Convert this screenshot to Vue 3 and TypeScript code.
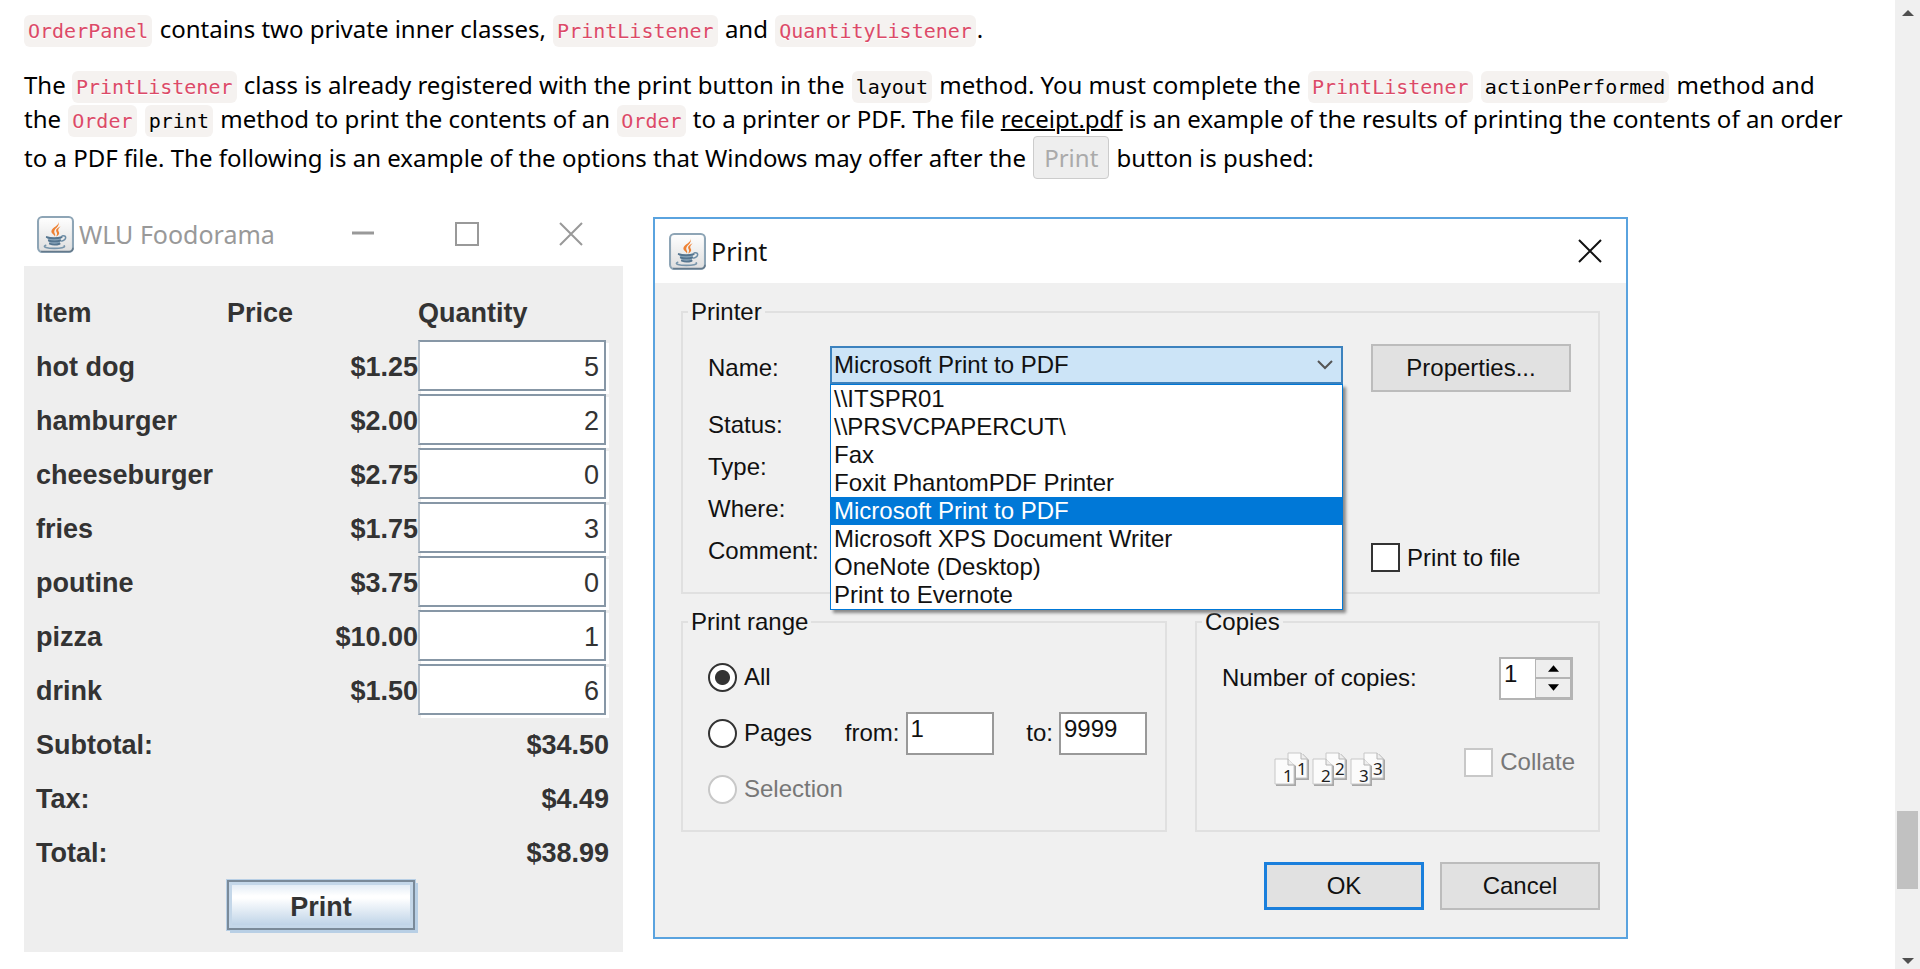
<script setup lang="ts">
import { ref } from 'vue'

interface MenuItem {
  name: string
  price: string
  quantity: string
}

const items = ref<MenuItem[]>([
  { name: 'hot dog', price: '$1.25', quantity: '5' },
  { name: 'hamburger', price: '$2.00', quantity: '2' },
  { name: 'cheeseburger', price: '$2.75', quantity: '0' },
  { name: 'fries', price: '$1.75', quantity: '3' },
  { name: 'poutine', price: '$3.75', quantity: '0' },
  { name: 'pizza', price: '$10.00', quantity: '1' },
  { name: 'drink', price: '$1.50', quantity: '6' },
])

const totals = [
  { label: 'Subtotal:', value: '$34.50' },
  { label: 'Tax:', value: '$4.49' },
  { label: 'Total:', value: '$38.99' },
]

const printers = [
  '\\\\ITSPR01',
  '\\\\PRSVCPAPERCUT\\',
  'Fax',
  'Foxit PhantomPDF Printer',
  'Microsoft Print to PDF',
  'Microsoft XPS Document Writer',
  'OneNote (Desktop)',
  'Print to Evernote',
]

const printer = ref('Microsoft Print to PDF')
const range = ref('all')
const fromPage = ref('1')
const toPage = ref('9999')
const copies = ref('1')
const toFile = ref(false)
const sheets = [1, 2, 3]
</script>

<template>
  <div class="page">
    <main class="content">
      <p>
        <code>OrderPanel</code> contains two private inner classes, <code>PrintListener</code> and
        <code>QuantityListener</code>.
      </p>
      <p>
        The <code>PrintListener</code> class is already registered with the print button in the
        <code class="method">layout</code> method. You must complete the <code>PrintListener</code>
        {{ ' ' }}<code class="method">actionPerformed</code> method and<br />
        the <code>Order</code>
        {{ ' ' }}<code class="method">print</code> method to print the contents of an
        <code>Order</code> to a printer or PDF. The file <a href="#receipt">receipt.pdf</a> is an
        example of the results of printing the contents of an order<br />
        to a PDF file. The following is an example of the options that Windows may offer after the
        <button class="key" type="button" disabled>Print</button> button is pushed:
      </p>

      <div class="screens">
        <section class="order">
          <header class="order-title">
            <svg class="java" viewBox="0 0 36 36" aria-hidden="true">
              <defs>
                <linearGradient id="tile" x1="0" y1="0" x2="0" y2="1">
                  <stop offset="0" stop-color="#ffffff" />
                  <stop offset="1" stop-color="#dedede" />
                </linearGradient>
                <symbol id="java-cup" viewBox="0 0 36 36">
                  <rect x="1" y="1" width="34" height="34" rx="4" fill="url(#tile)" stroke="#8ea5b6" stroke-width="2" />
                  <path d="M4 34.500H32Q35 34.500 35 31" fill="none" stroke="#64798a" stroke-width="1.500" />
                  <path d="M21 5C22.500 9 14 11 14 15C14 17 17 18 17.500 20C18.500 17 16 16.500 17 14C18 11.500 22.500 9.500 21 5Z" fill="#ee8133" />
                  <path d="M23 10C19 12 18 13.500 19 15.500C19.800 17 19.800 18 18.500 20C22 18 22 16.500 21 15C20 13.500 21 12 23 10Z" fill="#ee8133" />
                  <path d="M9.500 20.500C13 21.800 20 21.800 24 20.500L22 27C20 28.500 14.500 28.500 12.500 27Z" fill="#8aa5ba" />
                  <path d="M9.500 20.500C13 22 20 22 24 20.500M11.500 24C14 25 20 25 22.500 24M12.500 27C15 28 19 28 22 27" fill="none" stroke="#55758f" stroke-width="1.800" stroke-linecap="round" />
                  <path d="M24 19.500C29 18 29.500 23 23.500 24.500" fill="none" stroke="#6d8da6" stroke-width="1.500" />
                  <path d="M8.500 28.500C4.500 30 10 31.500 17 31.500C23 31.500 28 30.500 26.500 29" fill="none" stroke="#7895ab" stroke-width="1.500" stroke-linecap="round" />
                </symbol>
              </defs>
              <use href="#java-cup" />
            </svg>
            <h2>WLU Foodorama</h2>
            <div class="order-controls">
              <button type="button" aria-label="Minimize">
                <svg viewBox="0 0 24 24"><path d="M1 11H23" stroke-width="3" /></svg>
              </button>
              <button type="button" aria-label="Maximize">
                <svg viewBox="0 0 24 24"><rect x="1" y="1" width="22" height="22" stroke-width="2" /></svg>
              </button>
              <button type="button" aria-label="Close">
                <svg viewBox="0 0 24 24"><path d="M1 1L23 23M23 1L1 23" stroke-width="2" /></svg>
              </button>
            </div>
          </header>
          <div class="order-body">
            <table>
              <thead>
                <tr>
                  <th scope="col">Item</th>
                  <th scope="col">Price</th>
                  <th scope="col">Quantity</th>
                </tr>
              </thead>
              <tbody>
                <tr v-for="item in items" :key="item.name">
                  <th scope="row">{{ item.name }}</th>
                  <td>{{ item.price }}</td>
                  <td class="control">
                    <input v-model="item.quantity" class="quantity" type="text" :aria-label="item.name + ' quantity'" />
                  </td>
                </tr>
              </tbody>
              <tfoot>
                <tr v-for="total in totals" :key="total.label">
                  <th scope="row">{{ total.label }}</th>
                  <td></td>
                  <td>{{ total.value }}</td>
                </tr>
                <tr>
                  <td></td>
                  <td class="control"><button class="metal" type="button">Print</button></td>
                  <td></td>
                </tr>
              </tfoot>
            </table>
          </div>
        </section>

        <section class="dialog" role="dialog" aria-labelledby="dialog-title">
          <header class="dialog-title">
            <svg class="java" viewBox="0 0 36 36" aria-hidden="true"><use href="#java-cup" /></svg>
            <h2 id="dialog-title">Print</h2>
            <button class="dialog-close" type="button" aria-label="Close">
              <svg viewBox="0 0 24 24"><path d="M1 1L23 23M23 1L1 23" stroke-width="2" /></svg>
            </button>
          </header>
          <form class="dialog-body" @submit.prevent>
            <fieldset class="printer">
              <legend>Printer</legend>
              <div class="printer-grid">
                <label for="printer-name">Name:</label>
                <div class="combo">
                  <select id="printer-name" v-model="printer">
                    <option v-for="name in printers" :key="name">{{ name }}</option>
                  </select>
                  <svg class="chevron" viewBox="0 0 16 10" aria-hidden="true">
                    <path d="M1 1L8 8L15 1" fill="none" stroke="#555" stroke-width="2" />
                  </svg>
                  <ul role="listbox" aria-label="Printers">
                    <li
                      v-for="name in printers"
                      :key="name"
                      role="option"
                      :aria-selected="name === printer"
                      :class="{ selected: name === printer }"
                      @click="printer = name"
                    >{{ name }}</li>
                  </ul>
                </div>
                <button class="push properties" type="button">Properties...</button>
                <div class="captions">
                  <span>Status:</span>
                  <span>Type:</span>
                  <span>Where:</span>
                  <span>Comment:</span>
                </div>
                <label class="option to-file"><input v-model="toFile" type="checkbox" />Print to file</label>
              </div>
            </fieldset>

            <div class="groups">
              <fieldset>
                <legend>Print range</legend>
                <div class="range">
                  <label class="option"><input v-model="range" type="radio" name="range" value="all" />All</label>
                  <div class="range-pages">
                    <label class="option"><input v-model="range" type="radio" name="range" value="pages" />Pages</label>
                    <label class="bound">from:<input v-model="fromPage" class="field" type="text" /></label>
                    <label class="bound">to:<input v-model="toPage" class="field" type="text" /></label>
                  </div>
                  <label class="option off"><input type="radio" name="range" value="selection" disabled />Selection</label>
                </div>
              </fieldset>
              <fieldset>
                <legend>Copies</legend>
                <div class="copies">
                  <div class="copies-row">
                    <label for="copies">Number of copies:</label>
                    <div class="spinner">
                      <input id="copies" v-model="copies" type="text" />
                      <div class="spinner-buttons">
                        <button type="button" aria-label="More copies">
                          <svg viewBox="0 0 10 6"><path d="M5 0L10 6H0Z" /></svg>
                        </button>
                        <button type="button" aria-label="Fewer copies">
                          <svg viewBox="0 0 10 6"><path d="M0 0H10L5 6Z" /></svg>
                        </button>
                      </div>
                    </div>
                  </div>
                  <div class="collate-row">
                    <div class="sheets">
                      <svg v-for="n in sheets" :key="n" viewBox="0 0 36 34">
                        <path d="M15 2H29L35 8V28H15Z" fill="#a8a8a8" />
                        <path d="M14 1H27L33 7V26H14Z" fill="#fbfbfb" stroke="#c8c8c8" />
                        <path d="M27 1V7H33" fill="#eeeeee" stroke="#b5b5b5" />
                        <text x="23" y="23">{{ n }}</text>
                        <path d="M2 8H14L22 14V34H2Z" fill="#a8a8a8" />
                        <path d="M1 7H14L20 13V32H1Z" fill="#fbfbfb" stroke="#c8c8c8" />
                        <path d="M14 7V13H20" fill="#eeeeee" stroke="#b5b5b5" />
                        <text x="9" y="30">{{ n }}</text>
                      </svg>
                    </div>
                    <label class="option off"><input type="checkbox" disabled />Collate</label>
                  </div>
                </div>
              </fieldset>
            </div>

            <div class="actions">
              <button class="push primary" type="submit">OK</button>
              <button class="push" type="button">Cancel</button>
            </div>
          </form>
        </section>
      </div>
    </main>

    <div class="scrollbar" aria-hidden="true">
      <svg viewBox="0 0 12 6"><path d="M6 0L12 6H0Z" /></svg>
      <div class="track"><div class="thumb"></div></div>
      <svg viewBox="0 0 12 6"><path d="M0 0H12L6 6Z" /></svg>
    </div>
  </div>
</template>

<style>
body {
  margin: 0;
  background: #fff;
}
</style>

<style scoped>
* {
  box-sizing: border-box;
}
.page {
  display: grid;
  grid-template-columns: minmax(0, 1fr) 25px;
  height: 100vh;
  overflow: hidden;
  color: #000;
  font-family: "Noto Sans", "Open Sans", sans-serif;
  font-size: 24px;
  line-height: 34px;
}
.content {
  padding: 12px 24px 0;
  overflow: hidden;
}
p {
  margin: 0 0 22px;
}
code {
  margin: 0 1px;
  padding: 4px;
  border-radius: 6px;
  background: #f5f2f0;
  color: #dc4a68;
  font-family: "DejaVu Sans Mono", monospace;
  font-size: 20px;
  line-height: 20px;
  text-shadow: 0 1px #fff;
}
code:first-child {
  margin-left: 0;
}
code.method {
  color: #000;
}
a {
  color: #000;
  text-decoration-thickness: 2px;
}
button,
input,
select {
  margin: 0;
  font: inherit;
  color: inherit;
}
.key {
  height: 43px;
  margin: 0 1px;
  padding: 0 10px;
  border: 1px solid #ccc;
  border-radius: 4px;
  background: #eee;
  color: #aaa;
}

.screens {
  display: flex;
  align-items: flex-start;
  gap: 30px;
  padding-top: 7px;
  line-height: 28px;
}
h2 {
  margin: 0;
  font-family: "Noto Sans", "Open Sans", sans-serif;
  font-size: 25px;
  font-weight: 400;
}
.java {
  width: 37px;
  height: 37px;
  flex: none;
}

.order {
  flex: 0 1 599px;
  color: #333;
  font-family: "Liberation Sans", Arial, sans-serif;
  font-size: 27px;
}
.order-title {
  display: flex;
  align-items: center;
  height: 58px;
  padding: 0 40px 6px 13px;
  gap: 5px;
  color: #999;
}
.order-controls {
  display: flex;
  gap: 80px;
  margin-left: auto;
}
.order-controls button,
.dialog-close {
  display: flex;
  width: 24px;
  padding: 0;
  border: 0;
  background: none;
  color: #999;
}
.order-controls svg,
.dialog-close svg {
  width: 24px;
  height: 24px;
  fill: none;
  stroke: currentColor;
}
.order-body {
  padding: 20px 14px 18px 12px;
  background: #eee;
}
table {
  width: 100%;
  border-collapse: collapse;
  table-layout: fixed;
  font-weight: 700;
}
tr {
  height: 54px;
}
th,
td {
  padding: 0;
  text-align: left;
}
td {
  text-align: right;
}
.control {
  vertical-align: top;
}
.quantity {
  display: block;
  width: calc(100% - 3px);
  height: 51px;
  padding: 4px 5px 0;
  border: 2px solid #8797a6;
  border-left-color: #b4bec8;
  box-shadow: 3px 3px #fff;
  background: #fff;
  font-weight: 400;
  text-align: right;
}
.metal {
  display: block;
  width: calc(100% - 3px);
  height: 50px;
  padding: 4px 0 0;
  border: 2px solid #7a8a99;
  outline: 1px solid #b8cfe5;
  box-shadow: inset 0 0 0 3px #c4d7e9, 3px 3px #b8cfe5;
  background: linear-gradient(#dde8f3, #fff 30%, #fff 35%, #b8cfe5);
  font-weight: 700;
}

.dialog {
  flex: 0 1 975px;
  margin-top: 9px;
  border: 2px solid #5aa3df;
  background: #f0f0f0;
  color: #111;
  font-family: "Liberation Sans", Arial, sans-serif;
  font-size: 24px;
}
.dialog-title {
  display: flex;
  align-items: center;
  gap: 5px;
  height: 64px;
  padding: 0 24px 0 14px;
  background: #fff;
}
.dialog-close {
  margin-left: auto;
  color: #111;
}
.dialog-body {
  padding: 15px 26px 27px;
}
fieldset {
  min-width: 0;
  margin: 0;
  padding: 0;
  border: 2px solid #e0e0e0;
}
legend {
  margin-left: 5px;
  padding: 0 3px;
}
.printer-grid {
  display: grid;
  grid-template-columns: 122px minmax(0, 1fr) 28px 200px;
  grid-template-rows: 47px auto;
  row-gap: 13px;
  align-items: center;
  padding: 18px 27px 20px 25px;
}
.captions {
  display: grid;
  grid-column: 1;
  grid-row: 2;
  grid-template-rows: repeat(4, 42px);
  align-items: center;
}
.combo {
  position: relative;
  align-self: start;
  padding-top: 2px;
}
select {
  display: block;
  width: 100%;
  height: 38px;
  padding: 0 2px;
  appearance: none;
  border: 2px solid #3c82be;
  border-radius: 0;
  background: #cce4f7;
}
.chevron {
  position: absolute;
  top: 16px;
  right: 10px;
  width: 16px;
  height: 10px;
}
ul {
  position: absolute;
  z-index: 1;
  top: 40px;
  left: 0;
  right: 0;
  margin: 0;
  padding: 0;
  border: 1px solid #0078d7;
  box-shadow: 3px 3px 3px #888;
  background: #fff;
  list-style: none;
}
li {
  padding: 0 3px;
}
li.selected {
  background: #0078d7;
  color: #fff;
}
.push {
  width: 160px;
  height: 48px;
  padding: 0;
  border: 2px solid #bcbcbc;
  background: #e1e1e1;
}
.push.properties {
  grid-column: 4;
  width: 100%;
}
.push.primary {
  border: 3px solid #1a7fdc;
}
.option {
  display: flex;
  align-items: center;
  gap: 7px;
}
.option input {
  width: 29px;
  height: 29px;
  flex: none;
  appearance: none;
  border: 2px solid #333;
  background: #fff;
}
.option input[type="radio"] {
  border-radius: 50%;
}
.option input[type="radio"]:checked {
  background: radial-gradient(circle, #333 7px, #fff 8px);
}
.option.off {
  color: #777;
}
.option.off input {
  border-color: #c8c8c8;
}
.to-file {
  grid-column: 4;
  grid-row: 2;
  align-self: end;
}
.groups {
  display: grid;
  grid-template-columns: 486fr 405fr;
  gap: 28px;
  margin-top: 14px;
}
.range {
  display: grid;
  grid-template-rows: repeat(3, 56px);
  align-items: center;
  padding: 13px 18px 13px 25px;
}
.range-pages {
  display: flex;
  align-items: center;
  justify-content: space-between;
}
.bound {
  display: flex;
  align-items: center;
  gap: 6px;
}
.field {
  width: 88px;
  height: 43px;
  padding: 0 3px 8px;
  border: 2px solid #999;
  background: #fff;
}
.copies {
  display: grid;
  grid-template-rows: 84px 84px;
  padding: 0 25px;
}
.copies-row,
.collate-row {
  display: flex;
  align-items: center;
  justify-content: space-between;
}
.collate-row {
  padding-left: 52px;
}
.collate-row .option {
  margin-right: -2px;
}
.spinner {
  display: flex;
  width: 74px;
  height: 43px;
  border: 2px solid #b4b4b4;
}
.spinner > input {
  width: 34px;
  padding: 0 3px 8px;
  border: 0;
  background: #fff;
}
.spinner-buttons {
  display: grid;
  flex: 1;
  grid-template-rows: 1fr 1fr;
}
.spinner-buttons button {
  display: flex;
  align-items: center;
  justify-content: center;
  padding: 0;
  border: 1px solid #b4b4b4;
  background: #eee;
}
.spinner-buttons svg {
  width: 11px;
  height: 7px;
}
.sheets {
  display: flex;
  gap: 2px;
  padding-top: 14px;
}
.sheets svg {
  width: 36px;
  height: 34px;
}
.sheets text {
  fill: #222;
  font-family: "Noto Sans", sans-serif;
  font-size: 17px;
}
.actions {
  display: flex;
  justify-content: flex-end;
  gap: 16px;
  margin-top: 30px;
}

.scrollbar {
  display: flex;
  flex-direction: column;
  align-items: center;
  padding: 10px 2px 5px;
  background: #f0f0f0;
}
.scrollbar svg {
  width: 12px;
  height: 6px;
  fill: #505050;
}
.track {
  display: grid;
  flex: 1;
  grid-template-rows: 795fr 78fr 69fr;
  align-self: stretch;
}
.thumb {
  grid-row: 2;
  background: #c1c1c1;
}
</style>
